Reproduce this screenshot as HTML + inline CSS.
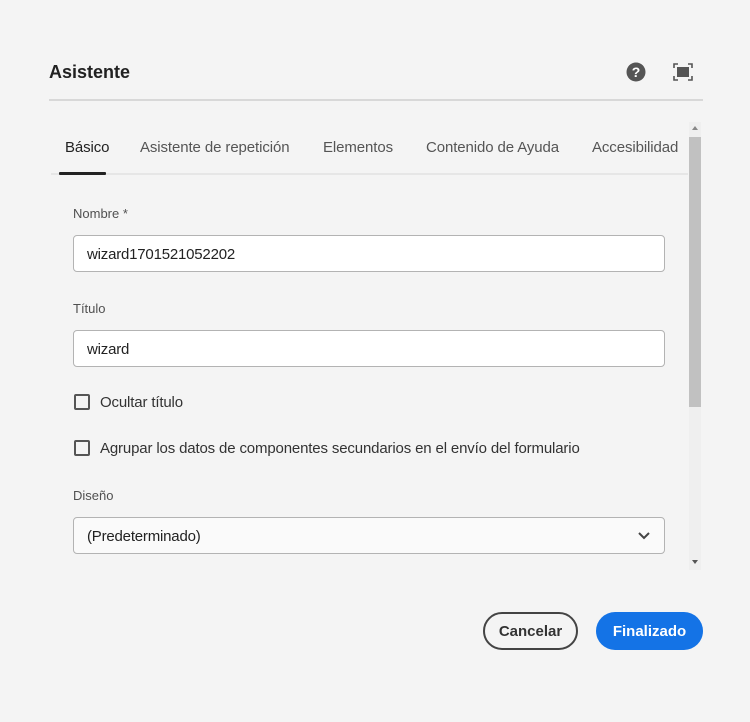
<!DOCTYPE html>
<html><head><style>
body{margin:0;width:750px;height:722px;background:#f4f4f4;font-family:"Liberation Sans",sans-serif;position:relative;overflow:hidden;color:#222}
.a{position:absolute}
.lbl{font-size:13px;color:#505050}
.inp{position:absolute;left:73px;width:590px;height:35px;background:#fff;border:1px solid #b3b3b3;border-radius:4px;box-sizing:content-box}
.inp span{position:absolute;left:13px;top:10px;font-size:15px;color:#222;letter-spacing:-0.2px}
.cb{position:absolute;left:74px;width:12px;height:12px;border:2px solid #555;border-radius:2px}
.ct{position:absolute;left:100px;font-size:15px;color:#333;letter-spacing:-0.15px}
.tab{position:absolute;top:139px;font-size:15px;color:#555;letter-spacing:-0.1px}
</style></head><body>
<div class="a" style="left:49px;top:62px;font-size:18px;font-weight:bold;color:#222">Asistente</div>
<svg class="a" style="left:626px;top:62px" width="20" height="20" viewBox="0 0 20 20"><circle cx="10" cy="10" r="9.5" fill="#555"/><text x="10" y="15" text-anchor="middle" font-size="14" font-weight="bold" fill="#fff" font-family="Liberation Sans">?</text></svg>
<svg class="a" style="left:673px;top:63px" width="20" height="18" viewBox="0 0 20 18"><path d="M1 5V1h4M15 1h4v4M19 13v4h-4M5 17H1v-4" stroke="#555" stroke-width="1.6" fill="none"/><rect x="4" y="4" width="12" height="10" fill="#555"/></svg>
<div class="a" style="left:49px;top:99px;width:654px;height:2px;background:#d8d8d8"></div>
<div class="tab" style="left:65px;color:#222">Básico</div>
<div class="tab" style="left:140px">Asistente de repetición</div>
<div class="tab" style="left:323px">Elementos</div>
<div class="tab" style="left:426px">Contenido de Ayuda</div>
<div class="tab" style="left:592px">Accesibilidad</div>
<div class="a" style="left:51px;top:173px;width:637px;height:2px;background:#e6e6e6"></div>
<div class="a" style="left:59px;top:172px;width:47px;height:3px;background:#222;border-radius:1px"></div>
<div class="a" style="left:689px;top:122px;width:12px;height:448px;background:#efefef"></div>
<div class="a" style="left:689px;top:137px;width:12px;height:270px;background:#c1c1c1"></div>
<div class="a" style="left:692px;top:126px;width:0;height:0;border-left:3px solid transparent;border-right:3px solid transparent;border-bottom:4px solid #888"></div>
<div class="a" style="left:692px;top:560px;width:0;height:0;border-left:3px solid transparent;border-right:3px solid transparent;border-top:4px solid #555"></div>
<div class="a lbl" style="left:73px;top:206px">Nombre *</div>
<div class="inp" style="top:235px"><span>wizard1701521052202</span></div>
<div class="a lbl" style="left:73px;top:301px">Título</div>
<div class="inp" style="top:330px"><span>wizard</span></div>
<div class="cb" style="top:394px"></div><div class="ct" style="top:394px">Ocultar título</div>
<div class="cb" style="top:440px"></div><div class="ct" style="top:440px">Agrupar los datos de componentes secundarios en el envío del formulario</div>
<div class="a lbl" style="left:73px;top:488px">Diseño</div>
<div class="inp" style="top:517px;background:#fafafa"><span>(Predeterminado)</span>
<svg class="a" style="left:563px;top:13px" width="14" height="10" viewBox="0 0 14 10"><path d="M2 2l5 5 5-5" stroke="#444" stroke-width="2" fill="none"/></svg></div>
<div class="a" style="left:483px;top:612px;width:91px;height:34px;border:2px solid #444;border-radius:19px;text-align:center;line-height:36px;font-size:15px;font-weight:bold;color:#333">Cancelar</div>
<div class="a" style="left:596px;top:612px;width:107px;height:38px;background:#1473e6;border-radius:19px;text-align:center;line-height:39px;font-size:15px;font-weight:bold;color:#fff">Finalizado</div>
</body></html>
